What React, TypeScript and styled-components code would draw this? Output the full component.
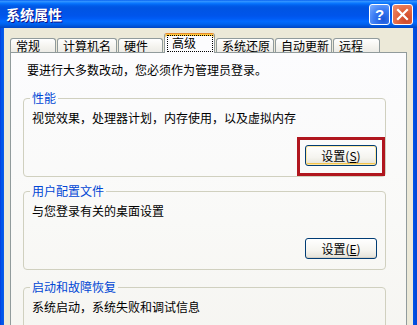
import styled, { createGlobalStyle } from "styled-components";

// ================= Global =================
const GlobalStyle = createGlobalStyle`
  html, body {
    margin: 0;
    padding: 0;
    background: #ffffff;
  }
  body {
    font-family: "Noto Sans CJK SC", "Noto Sans", "Liberation Sans", sans-serif;
    font-size: 12px;
    color: #000000;
  }
`;

// ================= Window frame =================
const Window = styled.div`
  width: 417px;
  height: 325px;
  overflow: hidden;
  display: flex;
  flex-direction: column;
  background: linear-gradient(to right, #0831d9 0, #0055ea 1px, #0055ea 3px, #1660e8 4px, #0055ea 413px, #0048d8 416px);
`;

const TitleBar = styled.div`
  height: 28px;
  flex: none;
  display: flex;
  align-items: center;
  padding: 0 4px 0 6px;
  background: linear-gradient(
    to bottom,
    #0058ee 0%,
    #3593ff 4%,
    #288eff 7%,
    #127dff 10%,
    #036ffc 14%,
    #0262ee 18%,
    #0057e5 24%,
    #0054e3 30%,
    #0055eb 56%,
    #005bf5 66%,
    #026afe 76%,
    #0062ef 86%,
    #0052d6 94%,
    #0045c4 100%
  );
`;

const Title = styled.span`
  flex: 1;
  color: #ffffff;
  font-size: 14px;
  font-weight: 700;
  line-height: 16px;
  text-shadow: 1px 1px 0 #0f1089;
`;

const CaptionButton = styled.div<{ $kind: "help" | "close" }>`
  width: 21px;
  height: 21px;
  box-sizing: border-box;
  margin-left: 2px;
  border: 1px solid #ffffff;
  border-radius: 3px;
  display: flex;
  align-items: center;
  justify-content: center;
  color: #ffffff;
  font-family: "Liberation Sans", Arial, sans-serif;
  font-weight: 700;
  font-size: 15px;
  line-height: 1;
  background: ${(p) =>
    p.$kind === "close"
      ? "radial-gradient(circle at 70% 75%, #cc4628 0%, #e1633e 45%, #f09070 100%)"
      : "radial-gradient(circle at 70% 75%, #1a56d8 0%, #3b7cf4 50%, #7fb0ff 100%)"};
`;

// ================= Body & tabs =================
const Body = styled.div`
  flex: 1;
  margin: 0 4px;
  padding: 5px 6px 0 6px;
  background: #ece9d8;
  overflow: hidden;
`;

const TabStrip = styled.div`
  display: flex;
  align-items: flex-end;
  gap: 1px;
  height: 19px;
  position: relative;
  z-index: 1;
`;

const Tab = styled.div<{ $w: number; $active?: boolean }>`
  width: ${(p) => p.$w}px;
  box-sizing: border-box;
  height: ${(p) => (p.$active ? 20 : 14)}px;
  margin-bottom: ${(p) => (p.$active ? -1 : 0)}px;
  border: 1px solid #919b9c;
  border-bottom: none;
  border-radius: 3px 3px 0 0;
  padding: ${(p) => (p.$active ? "1px 1px 0 2px" : "0 0 0 5px")};
  font-size: 12px;
  line-height: 13px;
  white-space: nowrap;
  background: ${(p) =>
    p.$active ? "#fcfcfe" : "linear-gradient(to bottom, #ffffff 0%, #f4f3ee 60%, #ecebe6 100%)"};
  ${(p) =>
    p.$active &&
    `
    border-top: 1px solid #e68b2c;
    box-shadow: inset 0 2px 0 #ffc83c;
    display: flex;
  `}
`;

const FocusRing = styled.span`
  flex: 1;
  height: 17px;
  box-sizing: border-box;
  border: 1px dotted #000000;
  padding-left: 4px;
  line-height: 14px;
`;

const Panel = styled.div`
  height: 340px;
  box-sizing: border-box;
  border: 1px solid #919b9c;
  padding: 10px 20px 0 12px;
  background: linear-gradient(to bottom, #fcfcfe 0%, #f9f9f7 50%, #f4f3ee 100%);
`;

const Intro = styled.p`
  margin: 0 0 0 4px;
  line-height: 14px;
`;

// ================= Group boxes =================
const Group = styled.fieldset<{ $gap: number; $bottom?: number }>`
  margin: ${(p) => p.$gap}px 0 0 0;
  padding: 6px 8px ${(p) => p.$bottom ?? 10}px 8px;
  border: 1px solid #d0d0bf;
  border-radius: 4px;
  min-width: 0;
`;

const Legend = styled.legend`
  padding: 0 2px;
  margin-left: -2px;
  color: #0046d5;
  line-height: 14px;
`;

const Desc = styled.div`
  line-height: 14px;
`;

const ButtonRow = styled.div`
  display: flex;
  justify-content: flex-end;
  margin-top: 20px;
`;

// red annotation frame drawn around a button, without moving it
const Highlight = styled.span`
  display: inline-flex;
  border: 3px solid #b0161e;
  padding: 5px 5px 7px 5px;
  margin: -8px -8px -10px -8px;
`;

const XpButton = styled.button<{ $hot?: boolean }>`
  width: 72px;
  height: 21px;
  padding: 0;
  border: 1px solid #003c74;
  border-radius: 3px;
  font-family: inherit;
  font-size: 12px;
  line-height: 14px;
  color: #000000;
  background: linear-gradient(to bottom, #ffffff 0%, #f5f4ef 60%, #e3e1d7 100%);
  box-shadow: ${(p) =>
    p.$hot
      ? "inset 0 0 0 1px #ffe7a2, inset 0 -2px 0 #f2c34e, inset 0 1px 0 #fff0cf"
      : "inset 0 -1px 0 #d6d0c5"};
  u {
    text-decoration: underline;
  }
`;

const tabs = [
  { label: "常规", w: 46 },
  { label: "计算机名", w: 60 },
  { label: "硬件", w: 45 },
  { label: "高级", w: 51, active: true },
  { label: "系统还原", w: 58 },
  { label: "自动更新", w: 57 },
  { label: "远程", w: 47 },
];

const HelpIcon = () => <span>?</span>;

const CloseIcon = () => (
  <svg width="13" height="13" viewBox="0 0 13 13">
    <path d="M2 2 L11 11 M11 2 L2 11" stroke="#ffffff" strokeWidth="2.2" strokeLinecap="square" />
  </svg>
);

export default function App() {
  return (
    <>
      <GlobalStyle />
      <Window>
        <TitleBar>
          <Title>系统属性</Title>
          <CaptionButton $kind="help">
            <HelpIcon />
          </CaptionButton>
          <CaptionButton $kind="close">
            <CloseIcon />
          </CaptionButton>
        </TitleBar>
        <Body>
          <TabStrip>
            {tabs.map((t) => (
              <Tab key={t.label} $w={t.w} $active={t.active}>
                {t.active ? <FocusRing>{t.label}</FocusRing> : t.label}
              </Tab>
            ))}
          </TabStrip>
          <Panel>
            <Intro>要进行大多数改动，您必须作为管理员登录。</Intro>

            <Group $gap={14}>
              <Legend>性能</Legend>
              <Desc>视觉效果，处理器计划，内存使用，以及虚拟内存</Desc>
              <ButtonRow>
                <Highlight>
                  <XpButton $hot>
                    设置(<u>S</u>)
                  </XpButton>
                </Highlight>
              </ButtonRow>
            </Group>

            <Group $gap={7}>
              <Legend>用户配置文件</Legend>
              <Desc>与您登录有关的桌面设置</Desc>
              <ButtonRow>
                <XpButton>
                  设置(<u>E</u>)
                </XpButton>
              </ButtonRow>
            </Group>

            {/* the rest of this group runs past the bottom of the shot */}
            <Group $gap={10} $bottom={50}>
              <Legend>启动和故障恢复</Legend>
              <Desc>系统启动，系统失败和调试信息</Desc>
            </Group>
          </Panel>
        </Body>
      </Window>
    </>
  );
}
